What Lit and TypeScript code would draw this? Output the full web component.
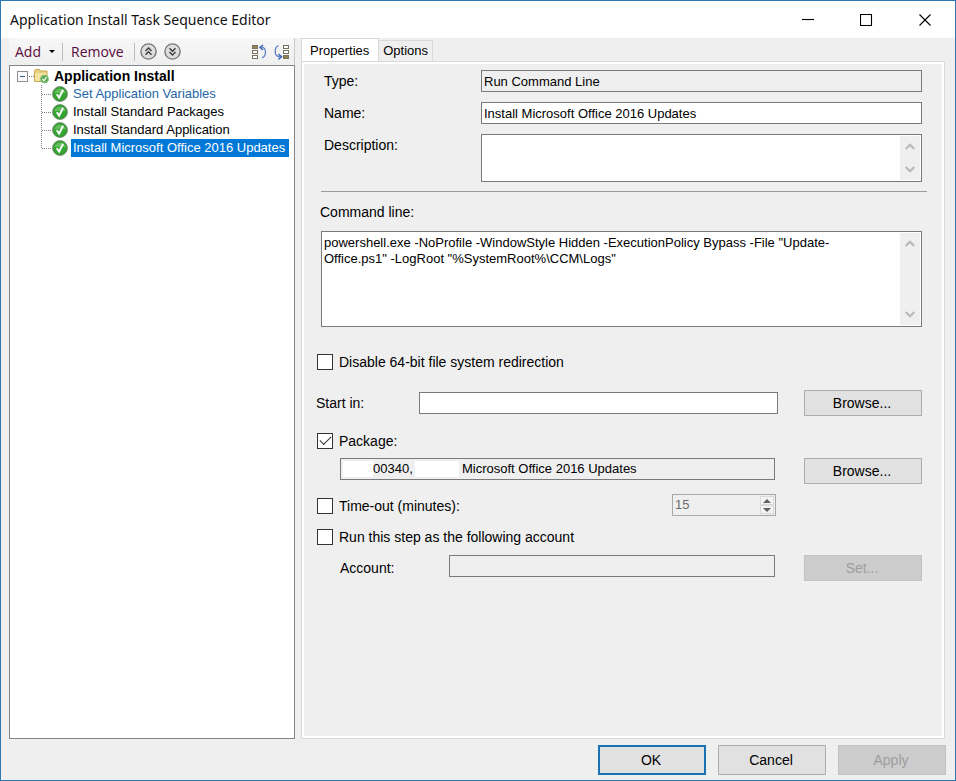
import { LitElement, html, css, svg } from "lit";
import { customElement, property, state } from "lit/decorators.js";
import { classMap } from "lit/directives/class-map.js";

const controls = css`
  *, *::before, *::after { box-sizing: border-box; }
  button, input, textarea { font: inherit; color: inherit; margin: 0; }
  .push {
    background: #e1e1e1;
    border: 1px solid #adadad;
    border-radius: 0;
    padding: 0 2px 0 0;
    font-size: 14px;
    line-height: 16px;
    text-align: center;
  }
  .push.primary { border: 2px solid #1a72b4; }
  .push:disabled { background: #cccccc; border-color: #c2c2c2; color: #9d9d9d; }
`;

@customElement("title-bar")
class TitleBar extends LitElement {
  @property() heading = "";

  static styles = [controls, css`
    :host {
      display: flex;
      align-items: center;
      height: 37px;
      padding: 0 1px 0 9px;
      background: #ffffff;
    }
    .heading {
      flex: 1;
      margin: 0;
      font: 400 14px/20px "Noto Sans", "Open Sans", sans-serif;
      color: #111111;
      white-space: nowrap;
    }
    .caption {
      width: 58px;
      height: 37px;
      display: grid;
      place-items: center;
      padding: 0;
      border: 0;
      background: none;
    }
  `];

  render() {
    const caption = (label: string, d: string) => html`
      <button class="caption" aria-label=${label}>
        <svg width="14" height="14" viewBox="0 0 14 14" fill="none" stroke="#000" stroke-width="1.1"><path d=${d} /></svg>
      </button>`;
    return html`
      <h1 class="heading">${this.heading}</h1>
      ${caption("Minimize", "M0 6.5H12")}
      ${caption("Maximize", "M.5 1.5h11v11h-11z")}
      ${caption("Close", "M1.500 1.500l11 11M12.500 1.500l-11 11")}
    `;
  }
}

interface Step {
  name: string;
  link?: boolean;
}

@customElement("sequence-tree")
class SequenceTree extends LitElement {
  @property({ attribute: false }) steps: Step[] = [];
  @state() selected = 3;

  static styles = [controls, css`
    :host { display: flex; flex-direction: column; min-width: 0; }
    .toolbar {
      display: flex;
      align-items: center;
      height: 27px;
      padding: 0 4px 0 4px;
      background: linear-gradient(#f7f7f7, #efefef);
      border-right: 1px solid #c8c8c8;
    }
    .tool {
      display: flex;
      align-items: center;
      gap: 8px;
      padding: 0 2px;
      border: 0;
      background: none;
      font: 400 14px/20px "Open Sans", "Noto Sans", sans-serif;
      color: #5b0a3c;
    }
    .icon { display: block; padding: 0; border: 0; background: none; }
    .icon svg { display: block; }
    .rule { width: 1px; height: 18px; background: #bdbdbd; margin: 0 6px 0 5px; }
    .rule.wide { margin: 0 5px 0 8px; }
    .round { margin-right: 7px; }
    .push-right { margin-left: auto; margin-right: 7px; }
    .tree {
      flex: 1;
      margin: 0;
      padding: 1px 0 0;
      list-style: none;
      background: #ffffff;
      border: 1px solid #82858a;
      font-size: 13px;
      line-height: 18px;
    }
    .steps { margin: 0; padding: 0 0 0 31px; list-style: none; }
    .root { display: flex; align-items: center; height: 18px; padding-left: 7px; font-size: 14px; font-weight: 700; }
    .root svg { display: block; }
    .root-label { margin-left: 5px; }
    .step { display: flex; align-items: center; height: 18px; }
    .step svg { display: block; flex: none; }
    .label {
      margin-left: 3px;
      padding: 0 4px 0 2px;
      border: 0;
      background: none;
      line-height: 18px;
      white-space: nowrap;
    }
    .label.link { color: #1d66a8; }
    .label.selected { background: #0078d7; color: #ffffff; }
  `];

  private branch(last: boolean) {
    return html`<svg width="11" height="18" viewBox="0 0 11 18" stroke="#7d7d7d" stroke-dasharray="1 1" aria-hidden="true">
      <path d=${last ? "M.5 0V9M1 9.500H11" : "M.5 0V18M1 9.500H11"} />
    </svg>`;
  }

  private check() {
    return html`<svg width="16" height="16" viewBox="0 0 16 16" aria-hidden="true">
      <circle cx="8" cy="8" r="7.500" fill="#2f8f2c" stroke="#8b9f8a" stroke-width="1" />
      <circle cx="8" cy="8" r="6.500" fill="#35a431" />
      <path d="M2.200 7.500a5.900 5.900 0 0 1 11.600 0c-3.500-1.300-7.500-1-11.600 0z" fill="#62bd5b" />
      <path d="M4.800 8.300l2.300 3.300 4-7.800" fill="none" stroke="#fff" stroke-width="2" />
    </svg>`;
  }

  private round(label: string, d: string) {
    return html`<button class="icon round" aria-label=${label}>
      <svg width="17" height="17" viewBox="0 0 17 17">
        <circle cx="8.500" cy="8.500" r="7.600" fill="#dedede" stroke="#777" stroke-width="1.400" />
        <path d=${d} fill="none" stroke="#3a3a3a" stroke-width="1.400" />
      </svg>
    </button>`;
  }

  render() {
    const box = (x: number, y: number, filled = false) =>
      svg`<rect x=${x} y=${y} width="5" height="3" fill=${filled ? "#8d8450" : "#fff"} stroke="#77725f" />`;
    return html`
      <div class="toolbar" role="toolbar">
        <button class="tool">Add
          <svg width="6" height="3" viewBox="0 0 6 3" aria-hidden="true"><path d="M0 0H6L3 3z" fill="#000" /></svg>
        </button>
        <span class="rule"></span>
        <button class="tool">Remove</button>
        <span class="rule wide"></span>
        ${this.round("Move up", "M5.500 8l3-3 3 3M5.500 11.700l3-3 3 3")}
        ${this.round("Move down", "M5.500 5.300l3 3 3-3M5.500 9l3 3 3-3")}
        <button class="icon push-right" aria-label="Move group up">
          <svg width="16" height="16" viewBox="0 0 16 16">
            ${box(1.5, 1.5, true)}${box(1.5, 6.5)}${box(1.5, 11.5)}
            <path d="M9.500 3.200c3.500-.4 5 2 5 4.800 0 3-1 5-3.500 6" fill="none" stroke="#5b7fc8" stroke-width="1.300" />
            <path d="M12 1L9 3.200l3 2.800" fill="none" stroke="#3f66b8" stroke-width="1.500" />
          </svg>
        </button>
        <button class="icon" aria-label="Move group down">
          <svg width="16" height="16" viewBox="0 0 16 16">
            ${box(9.5, 1.5)}${box(9.5, 6.5)}${box(9.5, 11.5, true)}
            <path d="M4.500 1.500C2 2.500 1.200 4.500 1.200 7.500c0 3.500 1.800 5.500 5.300 5.300" fill="none" stroke="#5b7fc8" stroke-width="1.300" />
            <path d="M4.500 10l3 2.800-3 2.500" fill="none" stroke="#3f66b8" stroke-width="1.500" />
          </svg>
        </button>
      </div>
      <ul class="tree" role="tree">
        <li role="treeitem" aria-expanded="true">
          <div class="root">
            <svg width="17" height="18" viewBox="0 0 17 18" aria-hidden="true">
              <rect x=".5" y="4.500" width="10" height="10" fill="#fbfbfb" stroke="#8f8f8f" />
              <path d="M3 9.500H8" stroke="#3d559c" />
              <path d="M12 9.500H17" stroke="#7d7d7d" stroke-dasharray="1 1" />
            </svg>
            <svg width="15" height="16" viewBox="0 0 15 16" aria-hidden="true">
              <path d="M.5 13.500v-11l1-1h4l1 1.500h6.500v10.500z" fill="#e8cf7c" stroke="#c4a650" />
              <path d="M1 5h11.500v8H1z" fill="#f3e2a0" />
              <circle cx="10.500" cy="11" r="4" fill="#5fae55" stroke="#8cc284" stroke-width=".8" />
              <path d="M8.500 11l1.500 1.800 2.500-3.800" fill="none" stroke="#fff" stroke-width="1.200" />
            </svg>
            <span class="root-label">Application Install</span>
          </div>
          <ul class="steps" role="group">
            ${this.steps.map((s, i) => html`
              <li class="step" role="treeitem">
                ${this.branch(i === this.steps.length - 1)}${this.check()}
                <button
                  class=${classMap({ label: true, link: !!s.link, selected: i === this.selected })}
                  @click=${() => (this.selected = i)}
                >${s.name}</button>
              </li>`)}
          </ul>
        </li>
      </ul>
    `;
  }
}

@customElement("step-properties")
class StepProperties extends LitElement {
  static styles = [controls, css`
    :host { display: flex; flex-direction: column; min-width: 0; }
    .tabs { display: flex; align-items: flex-end; height: 23px; }
    .tab {
      height: 21px;
      padding: 0 4px;
      border: 1px solid #d9d9d9;
      border-left: 0;
      border-bottom: 0;
      background: #efefef;
      font-size: 13px;
      line-height: 20px;
    }
    .tab.current {
      height: 23px;
      padding: 0 9px 0 8px;
      border-left: 1px solid #d9d9d9;
      background: #ffffff;
      line-height: 21px;
      box-shadow: 0 1px #ffffff;
    }
    .form {
      flex: 1;
      padding: 8px 22px 24px 14px;
      border: 1px solid #d9d9d9;
      box-shadow: inset 0 0 0 2px #ffffff;
      background: #efefef;
      font-size: 14px;
      line-height: 22px;
    }
    .fields { display: grid; grid-template-columns: 157px 1fr; row-gap: 10px; padding-left: 8px; }
    .box {
      display: block;
      width: 100%;
      min-width: 0;
      height: 22px;
      padding: 0 2px;
      border: 1px solid #7a7a7a;
      border-radius: 0;
      background: #ffffff;
      font-size: 13px;
      line-height: 16px;
    }
    .box.plain { background: #efefef; }
    .area { display: flex; border: 1px solid #7a7a7a; background: #ffffff; padding: 1px; }
    .short { height: 48px; }
    .tall { height: 96px; }
    .text {
      flex: 1;
      min-width: 0;
      padding: 2px 16px 2px 1px;
      border: 0;
      background: none;
      resize: none;
      overflow: hidden;
      font-size: 13px;
      line-height: 16px;
    }
    .scroll {
      display: flex;
      flex-direction: column;
      justify-content: space-between;
      width: 20px;
      background: #efefef;
    }
    .arrow { display: grid; place-items: center; height: 21px; padding: 0; border: 0; background: none; }
    .divider { height: 1px; margin: 9px -5px 9px 5px; border: 0; background: #9a9a9a; }
    .indent { margin-left: 5px; }
    .caption { display: block; padding: 0 0 8px 4px; }
    .row { display: flex; align-items: center; }
    .row .box { flex: 1; }
    .row .push { width: 118px; height: 26px; margin-left: 26px; }
    .inset { padding-left: 24px; align-items: flex-start; }
    .inset .push { margin-left: 29px; }
    .tick { display: flex; align-items: center; gap: 6px; height: 22px; }
    .tick input {
      appearance: none;
      display: grid;
      place-items: center;
      width: 16px;
      height: 16px;
      margin-left: 1px;
      border: 1px solid #333333;
      background: #ffffff;
    }
    .tick input:checked::before {
      content: "";
      width: 11px;
      height: 6px;
      border: solid #333333;
      border-width: 0 0 1px 1px;
      transform: translateY(-2px) rotate(-45deg);
    }
    .disable { margin-top: 24px; }
    .start { margin-top: 17px; }
    .start-label { width: 103px; line-height: 24px; }
    .package { margin-top: 14px; }
    .chosen { margin-top: 6px; }
    .timeout { margin-top: 10px; height: 24px; }
    .run { margin-top: 8px; }
    .account { margin-top: 7px; }
    .account-label { width: 109px; line-height: 26px; }
    .joined { display: flex; align-items: center; }
    .joined input { padding: 0; border: 0; background: none; width: 42px; height: 16px; font-size: 13px; line-height: 16px; }
    .joined .title { flex: 1; min-width: 0; margin-left: 3px; }
    .blank { width: 30px; height: 16px; background: #ffffff; }
    .blank.wide { width: 44px; }
    .spinner {
      display: flex;
      width: 104px;
      height: 22px;
      margin: 0 146px 2px auto;
      border: 1px solid #a8a8a8;
      padding: 1px;
    }
    .spinner input {
      appearance: textfield;
      flex: 1;
      min-width: 0;
      padding: 0 1px;
      border: 0;
      background: none;
      color: #6d6d6d;
      font-size: 13px;
      line-height: 18px;
    }
    .spin { display: flex; flex-direction: column; width: 14px; }
    .spin button { flex: 1; display: grid; place-items: center; padding: 0; border: 1px solid #dadada; background: #f3f3f3; }
  `];

  private scroll() {
    const arrow = (label: string, d: string) => html`
      <button class="arrow" type="button" aria-label=${label}>
        <svg width="10" height="7" viewBox="0 0 10 7"><path d=${d} fill="none" stroke="#b8b8b8" stroke-width="2" /></svg>
      </button>`;
    return html`<div class="scroll">
      ${arrow("Scroll up", "M.7 6l4.300-4.300L9.300 6")}
      ${arrow("Scroll down", "M.7 1l4.300 4.300L9.300 1")}
    </div>`;
  }

  private tick(id: string, label: string, checked = false) {
    return html`<label class="tick"><input type="checkbox" id=${id} .checked=${checked} />${label}</label>`;
  }

  private spin(label: string, d: string) {
    return html`<button type="button" disabled aria-label=${label}>
      <svg width="8" height="4" viewBox="0 0 8 4"><path d=${d} fill="#606060" /></svg>
    </button>`;
  }

  render() {
    const command =
      'powershell.exe -NoProfile -WindowStyle Hidden -ExecutionPolicy Bypass -File "Update-Office.ps1" -LogRoot "%SystemRoot%\\CCM\\Logs"';
    return html`
      <div class="tabs" role="tablist">
        <button class="tab current" role="tab" aria-selected="true">Properties</button>
        <button class="tab" role="tab" aria-selected="false">Options</button>
      </div>
      <form class="form" @submit=${(e: Event) => e.preventDefault()}>
        <div class="fields">
          <label for="type">Type:</label>
          <input class="box plain" id="type" readonly value="Run Command Line" />
          <label for="name">Name:</label>
          <input class="box" id="name" value="Install Microsoft Office 2016 Updates" />
          <label for="description">Description:</label>
          <div class="area short"><textarea class="text" id="description"></textarea>${this.scroll()}</div>
        </div>
        <hr class="divider" />
        <label class="caption" for="command">Command line:</label>
        <div class="area tall indent"><textarea class="text" id="command" spellcheck="false" .value=${command}></textarea>${this.scroll()}</div>
        <div class="disable">${this.tick("redirect", "Disable 64-bit file system redirection")}</div>
        <div class="row start">
          <label class="start-label" for="start">Start in:</label>
          <input class="box" id="start" />
          <button class="push" type="button">Browse...</button>
        </div>
        <div class="package">${this.tick("package", "Package:", true)}</div>
        <div class="row inset chosen">
          <div class="box plain joined">
            <span class="blank"></span>
            <input aria-label="Package ID" readonly value="00340," />
            <span class="blank wide"></span>
            <input class="title" aria-label="Package name" readonly value="Microsoft Office 2016 Updates" />
          </div>
          <button class="push" type="button">Browse...</button>
        </div>
        <div class="row timeout">
          ${this.tick("timeout", "Time-out (minutes):")}
          <div class="spinner">
            <input type="number" aria-label="Minutes" disabled value="15" />
            <div class="spin">${this.spin("More", "M0 4L4 0L8 4z")}${this.spin("Less", "M0 0H8L4 4z")}</div>
          </div>
        </div>
        <div class="run">${this.tick("run-as", "Run this step as the following account")}</div>
        <div class="row inset account">
          <label class="account-label" for="account">Account:</label>
          <input class="box plain" id="account" readonly />
          <button class="push" type="button" disabled>Set...</button>
        </div>
      </form>
    `;
  }
}

@customElement("app-root")
class AppRoot extends LitElement {
  private steps: Step[] = [
    { name: "Set Application Variables", link: true },
    { name: "Install Standard Packages" },
    { name: "Install Standard Application" },
    { name: "Install Microsoft Office 2016 Updates" },
  ];

  static styles = [controls, css`
    :host {
      display: flex;
      flex-direction: column;
      box-sizing: border-box;
      min-height: 100vh;
      border: 1px solid #2b79b5;
      background: #efefef;
      color: #000000;
      font-family: "Liberation Sans", Arial, sans-serif;
    }
    .body {
      flex: 1;
      display: grid;
      grid-template-columns: 286px minmax(0, 1fr);
      gap: 6px;
      padding: 0 10px 0 8px;
    }
    .footer { display: flex; justify-content: flex-end; gap: 12px; padding: 6px 9px 5px; }
    .footer .push { width: 108px; height: 30px; }
  `];

  render() {
    return html`
      <title-bar heading="Application Install Task Sequence Editor"></title-bar>
      <main class="body">
        <sequence-tree .steps=${this.steps}></sequence-tree>
        <step-properties></step-properties>
      </main>
      <footer class="footer">
        <button class="push primary">OK</button>
        <button class="push">Cancel</button>
        <button class="push" disabled>Apply</button>
      </footer>
    `;
  }
}
